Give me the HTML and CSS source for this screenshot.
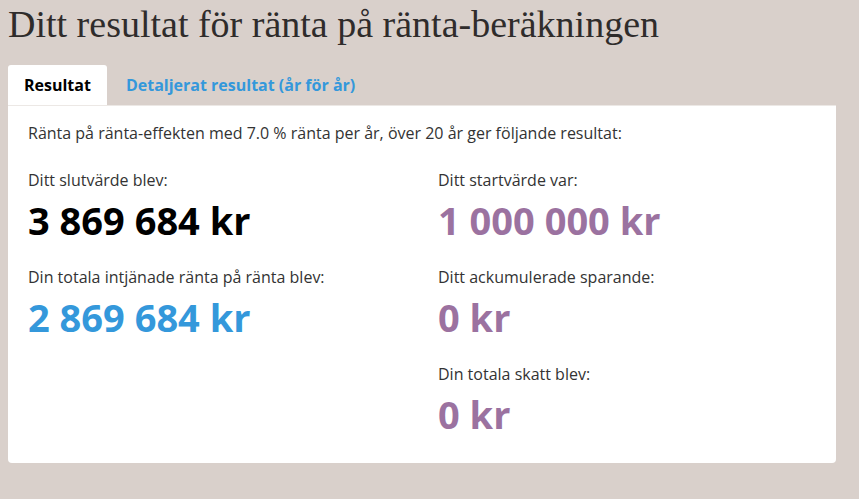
FILE: index.html
```html
<!DOCTYPE html>
<html>
<head>
    <meta charset="UTF-8">
    <title>Ränta på ränta - resultat</title>
    <link rel="stylesheet" href="styles.css">
</head>
<body>
    <h1>Ditt resultat för ränta på ränta-beräkningen</h1>
    <div class="tabs">
        <div class="tab active">Resultat</div>
        <div class="tab">Detaljerat resultat (år för år)</div>
    </div>
    <div class="panel">
        <p class="intro">Ränta på ränta-effekten med 7.0 % ränta per år, över 20 år ger följande resultat:</p>
        <div class="results">
            <div class="col">
                <div class="result">
                    <div class="label">Ditt slutvärde blev:</div>
                    <div class="value">3 869 684 kr</div>
                </div>
                <div class="result">
                    <div class="label">Din totala intjänade ränta på ränta blev:</div>
                    <div class="value blue">2 869 684 kr</div>
                </div>
            </div>
            <div class="col">
                <div class="result">
                    <div class="label">Ditt startvärde var:</div>
                    <div class="value purple">1 000 000 kr</div>
                </div>
                <div class="result">
                    <div class="label">Ditt ackumulerade sparande:</div>
                    <div class="value purple">0 kr</div>
                </div>
                <div class="result">
                    <div class="label">Din totala skatt blev:</div>
                    <div class="value purple">0 kr</div>
                </div>
            </div>
        </div>
    </div>
</body>
</html>
```

FILE: styles.css
```css
body {
    margin: 0;
    padding: 0 23px 0 8px;
    background: #d9d0cb;
    color: #333;
    font-family: "Open Sans", sans-serif;
}
h1 {
    margin: 0 0 21px 0;
    padding: 4px 0 0 0;
    font-family: "Liberation Serif", serif;
    font-weight: normal;
    font-size: 38px;
    line-height: 40px;
    color: #2f2c2b;
}
.tabs {
    display: flex;
    height: 40px;
}
.tab {
    padding: 0 19px;
    font-size: 16px;
    font-weight: bold;
    line-height: 40px;
    color: #3498db;
    border-radius: 3px 3px 0 0;
}
.tab.active {
    background: #fff;
    color: #000;
    padding: 0 16px;
}
.panel {
    background: #fff;
    border-top: 1px solid #ece8e5;
    border-radius: 0 0 4px 4px;
    padding: 15px 20px 23px 20px;
}
.intro {
    margin: 0 0 23px 0;
    font-size: 16px;
    line-height: 24px;
}
.results {
    display: grid;
    grid-template-columns: 410px 1fr;
}
.col {
    display: flex;
    flex-direction: column;
    gap: 19px;
}
.label {
    font-size: 16px;
    line-height: 24px;
}
.value {
    margin-top: 2px;
    font-size: 38px;
    font-weight: bold;
    line-height: 52px;
    color: #000;
}
.value.blue {
    color: #3498db;
}
.value.purple {
    color: #9b72a0;
}
```
